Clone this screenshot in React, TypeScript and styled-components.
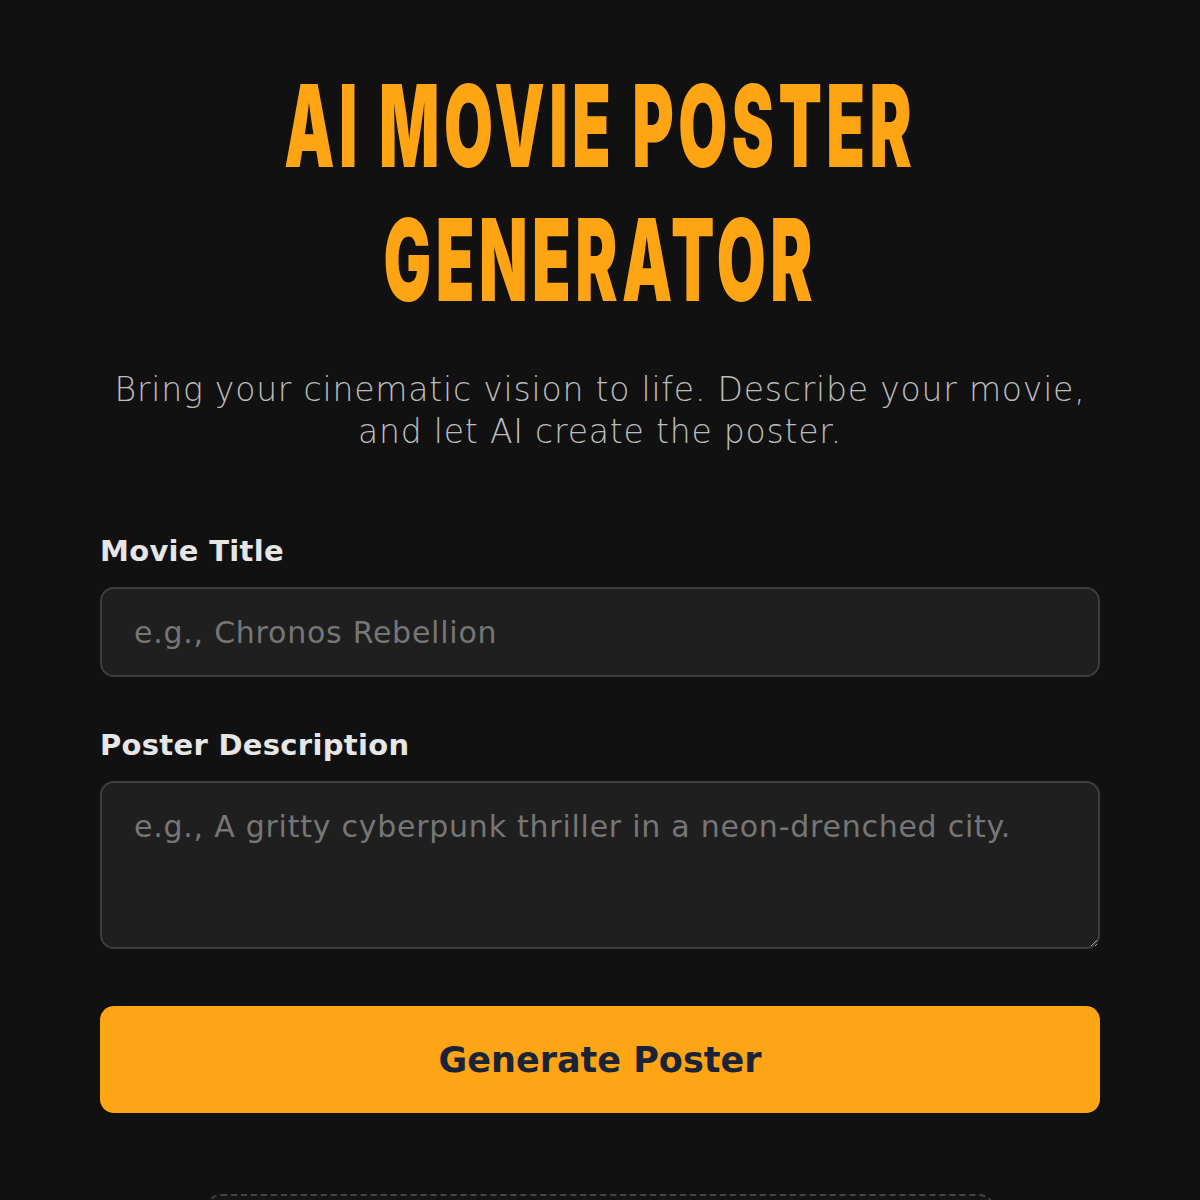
import React from "react";
import styled, { createGlobalStyle } from "styled-components";

const GlobalStyle = createGlobalStyle`
  html, body {
    margin: 0;
    padding: 0;
    background: #111111;
    overflow-x: hidden;
  }
  * { box-sizing: border-box; }
`;

const bodyFont = `"DejaVu Sans", "Noto Sans", sans-serif`;

const Page = styled.main`
  width: 1000px;
  margin: 0 auto;
  padding-top: 59px;
  display: flex;
  flex-direction: column;
  align-items: center;
  font-family: ${bodyFont};
`;

/* Heavy condensed headline: a black weight squeezed horizontally */
const Title = styled.h1`
  margin: 0;
  display: inline-block;
  white-space: nowrap;
  text-align: center;
  font-family: "Inter", "Roboto", sans-serif;
  font-weight: 900;
  font-size: 114px;
  line-height: 134px;
  letter-spacing: 8px;
  color: #ffa514;
  transform: scaleX(0.555);
`;

const Subtitle = styled.p`
  margin: 42px 0 0;
  width: 100%;
  text-align: center;
  font-size: 33px;
  line-height: 42px;
  font-weight: 300;
  letter-spacing: 0.8px;
  color: #bdbdbd;
`;

const Form = styled.form`
  width: 100%;
  margin-top: 80px;
  display: flex;
  flex-direction: column;
`;

const Field = styled.div`
  display: flex;
  flex-direction: column;
  gap: 18px;
  margin-bottom: 50px;
`;

const Label = styled.label`
  font-size: 29px;
  line-height: 36px;
  font-weight: 700;
  letter-spacing: 0.3px;
  color: #e6e6e6;
`;

const fieldBase = `
  width: 100%;
  background: #1f1f1f;
  border: 2px solid #3d3d3d;
  border-radius: 14px;
  color: #e6e6e6;
  font-family: ${bodyFont};
  font-size: 30px;
  letter-spacing: 0.75px;
  padding: 0 32px;
  outline: none;
  &::placeholder { color: #767676; }
`;

const TextInput = styled.input`
  ${fieldBase}
  height: 90px;
`;

const TextArea = styled.textarea`
  ${fieldBase}
  height: 168px;
  padding-top: 26px;
  line-height: 36px;
  resize: vertical;
`;

const Button = styled.button`
  margin-top: 7px;
  width: 100%;
  height: 107px;
  border: none;
  border-radius: 14px;
  background: #fea516;
  color: #1b2336;
  font-family: ${bodyFont};
  font-size: 35px;
  font-weight: 700;
  cursor: pointer;
`;

const Preview = styled.div`
  margin-top: 81px;
  width: 790px;
  height: 400px;
  border: 2px dashed #444444;
  border-radius: 16px;
  background: #151515;
`;

export default function App() {
  return (
    <>
      <GlobalStyle />
      <Page>
        <Title>
          AI MOVIE POSTER
          <br />
          GENERATOR
        </Title>
        <Subtitle>
          Bring your cinematic vision to life. Describe your movie,
          <br />
          and let AI create the poster.
        </Subtitle>
        <Form onSubmit={(e) => e.preventDefault()}>
          <Field>
            <Label htmlFor="title">Movie Title</Label>
            <TextInput id="title" placeholder="e.g., Chronos Rebellion" />
          </Field>
          <Field>
            <Label htmlFor="desc">Poster Description</Label>
            <TextArea
              id="desc"
              placeholder="e.g., A gritty cyberpunk thriller in a neon-drenched city."
            />
          </Field>
          <Button type="submit">Generate Poster</Button>
        </Form>
        <Preview />
      </Page>
    </>
  );
}
